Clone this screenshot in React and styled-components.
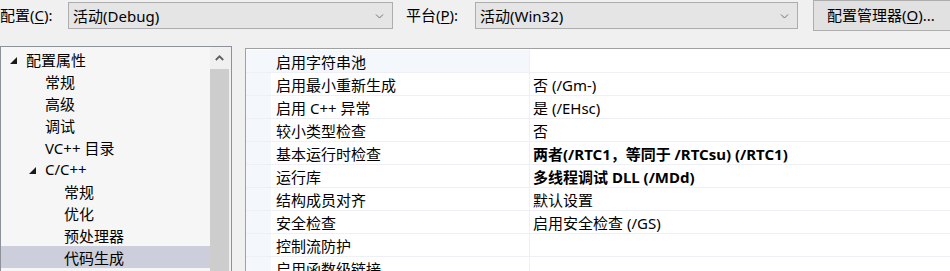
import React from "react";
import styled, { createGlobalStyle } from "styled-components";

const GlobalStyle = createGlobalStyle`
  html, body { margin: 0; padding: 0; background: #f0f0f0; }
  body {
    font-family: "Noto Sans", "Noto Sans CJK SC", sans-serif;
    font-size: 15px;
    color: #000;
    overflow: hidden;
  }
  * { box-sizing: border-box; }
`;

const Page = styled.div`
  width: 950px;
  height: 271px;
  overflow: hidden;
  display: flex;
  flex-direction: column;
`;

const TopBar = styled.div`
  height: 46px;
  display: flex;
  align-items: flex-start;
  flex-shrink: 0;
  overflow: hidden;
`;

const FieldLabel = styled.div`
  width: ${(p) => p.$width}px;
  margin-left: ${(p) => p.$offset || 0}px;
  flex-shrink: 0;
  height: 31px;
  line-height: 31px;
  white-space: nowrap;
  u { text-decoration: underline; text-underline-offset: 2px; }
`;

const Combo = styled.div`
  width: ${(p) => p.$width}px;
  flex-shrink: 0;
  height: 27px;
  margin-top: 2px;
  background: #e5e5e5;
  border: 1px solid #adadad;
  display: flex;
  align-items: center;
  padding: 0 8px 0 4px;
  justify-content: space-between;
  white-space: nowrap;
`;

const ManagerButton = styled.div`
  margin-left: 15px;
  width: 150px;
  flex-shrink: 0;
  height: 31px;
  background: #e1e1e1;
  border: 1px solid #adadad;
  padding-left: 13px;
  line-height: 29px;
  white-space: nowrap;
  u { text-decoration: underline; text-underline-offset: 2px; }
`;

const Body = styled.div`
  display: flex;
  align-items: flex-start;
  flex: 1;
`;

const TreePanel = styled.div`
  width: 232px;
  height: 260px;
  border: 1px solid #8d9199;
  background: #f6f6f6;
  display: flex;
  flex-shrink: 0;
`;

const TreeList = styled.div`
  width: 209px;
  padding-top: 1px;
  display: flex;
  flex-direction: column;
`;

const TreeRow = styled.div`
  height: 22px;
  display: flex;
  align-items: center;
  padding-left: ${(p) => p.$indent}px;
  background: ${(p) => (p.$selected ? "#cccedb" : "transparent")};
  white-space: nowrap;
`;

const Expander = styled.svg`
  width: 7px;
  height: 7px;
  margin-right: 9px;
  margin-top: 2px;
  flex-shrink: 0;
`;

const ScrollBar = styled.div`
  width: 21px;
  background: #f0f0f0;
  display: flex;
  flex-direction: column;
`;

const ScrollArrow = styled.div`
  height: 22px;
  display: flex;
  align-items: center;
  justify-content: center;
  padding-right: 2px;
`;

const ScrollThumb = styled.div`
  flex: 1;
  margin-right: 2px;
  background: #cdcdcd;
`;

const GridPanel = styled.div`
  margin-left: 13px;
  margin-top: 2px;
  flex: 1;
  height: 260px;
  border-top: 1px solid #a0a0a0;
  border-left: 1px solid #a0a0a0;
  background: #fff;
  display: flex;
  flex-direction: column;
`;

const GridRow = styled.div`
  display: grid;
  grid-template-columns: 25px 259px 1fr;
  height: 23px;
  flex-shrink: 0;
  border-bottom: 1px solid #eef0f5;
  &:first-child { margin-top: 1px; }
`;

const Margin = styled.div`
  background: #f4f7fc;
`;

const NameCell = styled.div`
  padding-left: 5px;
  display: flex;
  align-items: center;
  white-space: nowrap;
  border-right: 1px solid #eef0f5;
  background: ${(p) => (p.$highlight ? "#f4f7fc" : "#fff")};
`;

const ValueCell = styled.div`
  padding-left: 3px;
  display: flex;
  align-items: center;
  white-space: nowrap;
  font-weight: ${(p) => (p.$bold ? 700 : 400)};
`;

const Chevron = ({ up }) => (
  <svg width="9" height="6" viewBox="0 0 9 6">
    {up ? (
      <polyline points="0.8,5 4.5,1.3 8.2,5" fill="none" stroke="#606060" strokeWidth="1.8" />
    ) : (
      <polyline points="1,1.5 4.5,5 8,1.5" fill="none" stroke="#707070" strokeWidth="1" />
    )}
  </svg>
);

const Triangle = () => (
  <Expander viewBox="0 0 7 7">
    <polygon points="7,0 7,7 0,7" fill="#1a1a1a" />
  </Expander>
);

const tree = [
  { label: "配置属性", indent: 9, expanded: true },
  { label: "常规", indent: 44 },
  { label: "高级", indent: 44 },
  { label: "调试", indent: 44 },
  { label: "VC++ 目录", indent: 44 },
  { label: "C/C++", indent: 28, expanded: true },
  { label: "常规", indent: 63 },
  { label: "优化", indent: 63 },
  { label: "预处理器", indent: 63 },
  { label: "代码生成", indent: 63, selected: true },
];

const rows = [
  { name: "启用字符串池", value: "", highlight: true },
  { name: "启用最小重新生成", value: "否 (/Gm-)" },
  { name: "启用 C++ 异常", value: "是 (/EHsc)" },
  { name: "较小类型检查", value: "否" },
  { name: "基本运行时检查", value: "两者(/RTC1，等同于 /RTCsu) (/RTC1)", bold: true },
  { name: "运行库", value: "多线程调试 DLL (/MDd)", bold: true },
  { name: "结构成员对齐", value: "默认设置" },
  { name: "安全检查", value: "启用安全检查 (/GS)" },
  { name: "控制流防护", value: "" },
  { name: "启用函数级链接", value: "" },
];

export default function App() {
  return (
    <Page>
      <GlobalStyle />
      <TopBar>
        <FieldLabel $width={68}>
          配置(<u>C</u>):
        </FieldLabel>
        <Combo $width={325}>
          <span>活动(Debug)</span>
          <Chevron />
        </Combo>
        <FieldLabel $width={69} $offset={13}>
          平台(<u>P</u>):
        </FieldLabel>
        <Combo $width={323}>
          <span>活动(Win32)</span>
          <Chevron />
        </Combo>
        <ManagerButton>
          配置管理器(<u>O</u>)...
        </ManagerButton>
      </TopBar>
      <Body>
        <TreePanel>
          <TreeList>
            {tree.map((t, i) => (
              <TreeRow key={i} $indent={t.indent} $selected={t.selected}>
                {t.expanded && <Triangle />}
                <span>{t.label}</span>
              </TreeRow>
            ))}
          </TreeList>
          <ScrollBar>
            <ScrollArrow>
              <Chevron up />
            </ScrollArrow>
            <ScrollThumb />
          </ScrollBar>
        </TreePanel>
        <GridPanel>
          {rows.map((r, i) => (
            <GridRow key={i}>
              <Margin />
              <NameCell $highlight={r.highlight}>{r.name}</NameCell>
              <ValueCell $bold={r.bold}>{r.value}</ValueCell>
            </GridRow>
          ))}
        </GridPanel>
      </Body>
    </Page>
  );
}
